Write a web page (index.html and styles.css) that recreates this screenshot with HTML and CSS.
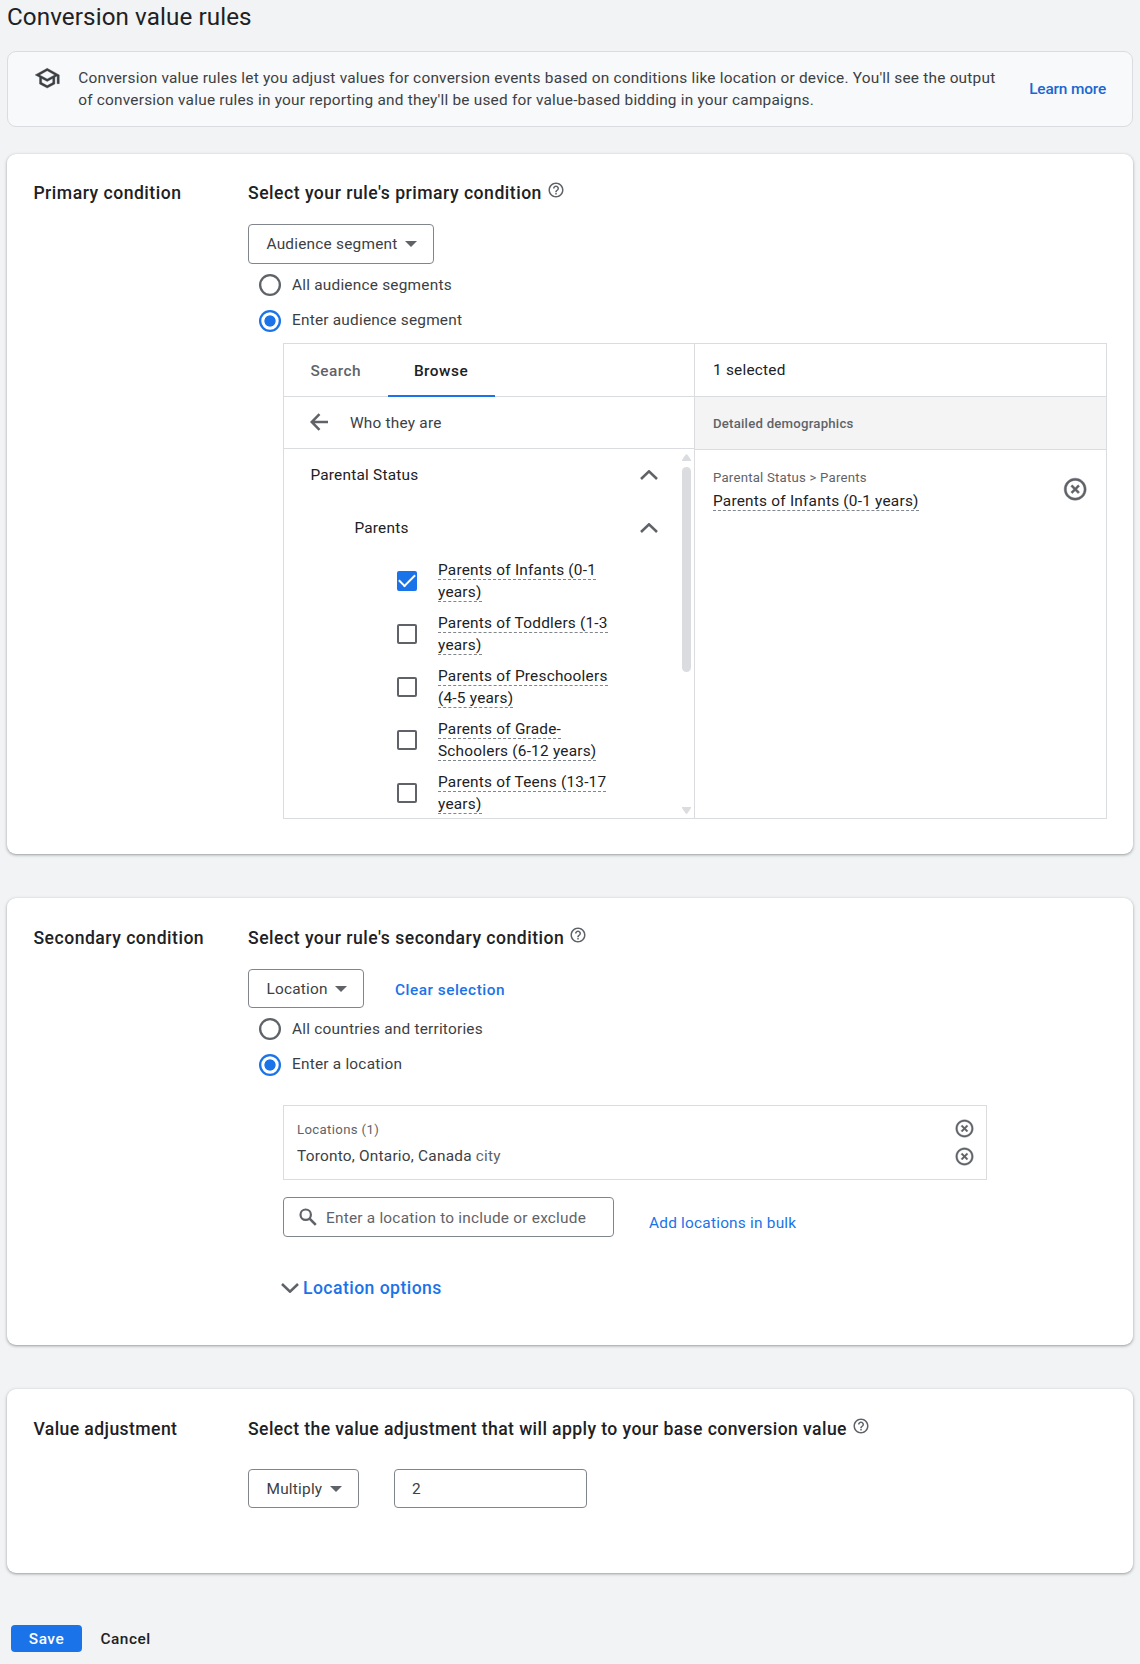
FILE: index.html
```html
<!DOCTYPE html>
<html lang="en">
<head>
  <meta charset="UTF-8" />
  <meta name="viewport" content="width=device-width, initial-scale=1" />
  <title>Conversion value rules</title>
  <link rel="stylesheet" href="styles.css">
</head>
<body>
  <svg class="sprite" width="0" height="0">
    <symbol id="help" viewBox="0 0 24 24"><path d="M11 18h2v-2h-2v2zm1-16C6.480 2 2 6.480 2 12s4.480 10 10 10 10-4.480 10-10S17.520 2 12 2zm0 18c-4.410 0-8-3.590-8-8s3.590-8 8-8 8 3.590 8 8-3.590 8-8 8zm0-14c-2.210 0-4 1.790-4 4h2c0-1.100.9-2 2-2s2 .9 2 2c0 2-3 1.750-3 5h2c0-2.250 3-2.500 3-5 0-2.210-1.790-4-4-4z"/></symbol>
    <symbol id="remove" viewBox="0 0 24 24"><path d="M14.590 8L12 10.590 9.410 8 8 9.410 10.590 12 8 14.590 9.410 16 12 13.410 14.590 16 16 14.590 13.410 12 16 9.410 14.590 8zM12 2C6.470 2 2 6.470 2 12s4.470 10 10 10 10-4.470 10-10S17.530 2 12 2zm0 18c-4.410 0-8-3.590-8-8s3.590-8 8-8 8 3.590 8 8-3.590 8-8 8z" stroke="currentColor" stroke-width="0.400"/></symbol>
    <symbol id="chevron-up" viewBox="0 0 18 10"><path d="M1 9l8-7.600L17 9" fill="none" stroke="currentColor" stroke-width="2.600"/></symbol>
    <symbol id="chevron-down" viewBox="0 0 18 10"><path d="M1 1l8 7.600L17 1" fill="none" stroke="currentColor" stroke-width="2.600"/></symbol>
  </svg>

  <h1>Conversion value rules</h1>

  <div class="banner">
    <svg class="school" viewBox="0 0 24 24"><path d="M12 3L1 9l4 2.180v6L12 21l7-3.820v-6l2-1.090V17h2V9L12 3zm6.820 6L12 12.720 5.180 9 12 5.280 18.820 9zM17 15.990l-5 2.730-5-2.730v-3.720L12 15l5-2.730v3.720z" stroke="currentColor" stroke-width="0.300"/></svg>
    <p>Conversion value rules let you adjust values for conversion events based on conditions like location or device. You'll see the output<br>of conversion value rules in your reporting and they'll be used for value-based bidding in your campaigns.</p>
    <a class="learn-more" href="#">Learn more</a>
  </div>

  <section class="card primary">
    <h2>Primary condition</h2>
    <div class="content">
      <h3>Select your rule's primary condition<svg class="help"><use href="#help"/></svg></h3>
      <button class="select w-audience">Audience segment<i class="caret"></i></button>
      <div class="radios">
        <label><input type="radio" name="audience">All audience segments</label>
        <label><input type="radio" name="audience" checked>Enter audience segment</label>
      </div>
      <div class="picker">
        <div class="browse">
          <div class="tabs">
            <span class="tab">Search</span>
            <span class="tab active">Browse</span>
          </div>
          <div class="back">
            <svg viewBox="0 0 18 18"><path d="M18 9H2M9.500 1.200L1.700 9l7.800 7.800" fill="none" stroke="currentColor" stroke-width="2.500"/></svg>
            Who they are
          </div>
          <div class="list">
            <div class="tree">
              <div class="group">Parental Status<svg class="chevron"><use href="#chevron-up"/></svg></div>
              <div class="group nested">Parents<svg class="chevron"><use href="#chevron-up"/></svg></div>
              <label class="item"><input type="checkbox" checked><span><u>Parents of Infants (0-1<br>years)</u></span></label>
              <label class="item"><input type="checkbox"><span><u>Parents of Toddlers (1-3<br>years)</u></span></label>
              <label class="item"><input type="checkbox"><span><u>Parents of Preschoolers<br>(4-5 years)</u></span></label>
              <label class="item"><input type="checkbox"><span><u>Parents of Grade-<br>Schoolers (6-12 years)</u></span></label>
              <label class="item"><input type="checkbox"><span><u>Parents of Teens (13-17<br>years)</u></span></label>
            </div>
            <div class="scrollbar">
              <svg viewBox="0 0 9 7"><path d="M4.500 0Q5.200 0 9 6v1H0V6Q3.800 0 4.500 0z"/></svg>
              <div class="thumb"></div>
              <svg viewBox="0 0 9 7"><path d="M4.500 7Q5.200 7 9 1V0H0v1Q3.800 7 4.500 7z"/></svg>
            </div>
          </div>
        </div>
        <div class="selected">
          <div class="count">1 selected</div>
          <div class="category">Detailed demographics</div>
          <div class="choice">
            <div>
              <div class="path">Parental Status &gt; Parents</div>
              <div class="name"><u>Parents of Infants (0-1 years)</u></div>
            </div>
            <svg class="remove large"><use href="#remove"/></svg>
          </div>
        </div>
      </div>
    </div>
  </section>

  <section class="card secondary">
    <h2>Secondary condition</h2>
    <div class="content">
      <h3>Select your rule's secondary condition<svg class="help"><use href="#help"/></svg></h3>
      <div class="row">
        <button class="select w-location">Location<i class="caret"></i></button>
        <a class="clear" href="#">Clear selection</a>
      </div>
      <div class="radios">
        <label><input type="radio" name="location">All countries and territories</label>
        <label><input type="radio" name="location" checked>Enter a location</label>
      </div>
      <div class="locations">
        <div class="loc-row"><span class="loc-title">Locations (1)</span><svg class="remove"><use href="#remove"/></svg></div>
        <div class="loc-row"><span class="loc-name">Toronto, Ontario, Canada <span class="muted">city</span></span><svg class="remove"><use href="#remove"/></svg></div>
      </div>
      <div class="search-row">
        <div class="search">
          <svg viewBox="0 0 18 18"><circle cx="6.700" cy="6.700" r="5.200" fill="none" stroke="currentColor" stroke-width="2.200"/><path d="M10.600 10.600l6.200 6.200" stroke="currentColor" stroke-width="2.600"/></svg>
          <span>Enter a location to include or exclude</span>
        </div>
        <a class="bulk" href="#">Add locations in bulk</a>
      </div>
      <a class="options" href="#"><svg class="chevron"><use href="#chevron-down"/></svg><span>Location options</span></a>
    </div>
  </section>

  <section class="card value">
    <h2>Value adjustment</h2>
    <div class="content">
      <h3>Select the value adjustment that will apply to your base conversion value<svg class="help"><use href="#help"/></svg></h3>
      <div class="row">
        <button class="select w-multiply">Multiply<i class="caret"></i></button>
        <input class="amount" type="text" value="2">
      </div>
    </div>
  </section>

  <div class="actions">
    <button class="save">Save</button>
    <button class="cancel">Cancel</button>
  </div>
</body>
</html>
```
FILE: styles.css
```css
* {
  box-sizing: border-box;
}
body {
  margin: 0;
  padding: 0 7px;
  height: 1664px;
  overflow: hidden;
  background: #f1f3f4;
  color: #3c4043;
  font-family: Roboto, "Liberation Sans", sans-serif;
  font-size: 15.4px;
  line-height: 22px;
  letter-spacing: 0.22px;
}
h1, h2, h3, p {
  margin: 0;
}
svg {
  fill: currentColor;
  flex: none;
}
.sprite {
  position: absolute;
}
a {
  color: #1a73e8;
  text-decoration: none;
}
button, input {
  font: inherit;
  letter-spacing: inherit;
  color: inherit;
}
h1 {
  height: 51px;
  font-size: 24.2px;
  font-weight: 400;
  line-height: 34px;
  letter-spacing: 0.1px;
  color: #202124;
}
.banner {
  display: flex;
  height: 76px;
  margin-bottom: 27px;
  padding: 15px 26px 0 27px;
  background: #f8f9fa;
  border: 1px solid #dadce0;
  border-radius: 9px;
}
.school {
  width: 26.4px;
  height: 26.4px;
  margin: -2px 17.4px 0 -0.6px;
}
.banner p {
  flex: 1;
  white-space: nowrap;
}
.learn-more {
  margin-top: 11px;
  font-weight: 500;
  letter-spacing: -0.15px;
  color: #1967d2;
}

/* cards */
.card {
  display: flex;
  margin-bottom: 44px;
  padding: 27px 26px 0 26.4px;
  background: #fff;
  border-radius: 9px;
  box-shadow: 0 1px 2px rgba(60,64,67,0.3), 0 1px 3px 1px rgba(60,64,67,0.15);
}
.primary { height: 700px; }
.secondary { height: 447px; }
.value { height: 184px; }
.secondary, .value {
  padding-top: 28px;
}
h2, h3 {
  font-size: 17.6px;
  font-weight: 500;
  line-height: 24px;
  letter-spacing: 0.5px;
  color: #202124;
}
h2 {
  width: 214.6px;
}
.value h2, .value h3 {
  letter-spacing: 0.41px;
}
.content {
  flex: 1;
}
h3 {
  display: flex;
  white-space: nowrap;
}
.help {
  width: 18px;
  height: 18px;
  margin: 0 0 0 5px;
  color: #5f6368;
}
.select {
  display: flex;
  align-items: center;
  justify-content: space-between;
  height: 40px;
  margin-top: 19px;
  padding: 0 16px 0 17.5px;
  background: #fff;
  border: 1px solid #80868b;
  border-radius: 4px;
}
.row .select {
  height: 39px;
}
.w-audience { width: 186px; }
.w-location { width: 116px; }
.w-multiply { width: 111px; }
.caret {
  border: 6px solid transparent;
  border-top-color: #5f6368;
  border-bottom: 0;
}
.row {
  display: flex;
}
.radios {
  margin: 3px 0 0 11px;
}
.radios label {
  display: flex;
  align-items: center;
  height: 35.5px;
}
input[type="radio"] {
  appearance: none;
  width: 22px;
  height: 22px;
  margin: 1px 11px 0 0;
  border-radius: 50%;
  box-shadow: inset 0 0 0 2.3px #5f6368;
}
input[type="radio"]:checked {
  background: radial-gradient(circle, #1a73e8 5.2px, #fff 6px);
  box-shadow: inset 0 0 0 2.3px #1a73e8;
}

/* audience picker */
.picker {
  display: flex;
  width: 824px;
  height: 476px;
  margin: 5px 0 0 35px;
  border: 1px solid #dadce0;
}
.browse {
  display: flex;
  flex-direction: column;
  width: 411px;
  border-right: 1px solid #dadce0;
}
.tabs {
  display: flex;
  height: 53px;
  border-bottom: 1px solid #dadce0;
  font-weight: 500;
  letter-spacing: 0.5px;
  line-height: 54px;
  color: #5f6368;
}
.tab {
  height: 53px;
  padding: 0 26.4px;
}
.active {
  color: #202124;
  border-bottom: 2px solid #1a73e8;
}
.back {
  display: flex;
  align-items: center;
  height: 52px;
  padding-left: 26px;
  border-bottom: 1px solid #dadce0;
}
.back svg {
  width: 18px;
  height: 18px;
  margin: -2px 22px 0 0;
  color: #5f6368;
}
.list {
  display: flex;
  height: 369px;
  overflow: hidden;
  color: #202124;
}
.tree {
  flex: 1;
  margin-top: -1px;
}
.group {
  display: flex;
  align-items: center;
  justify-content: space-between;
  height: 53px;
  padding: 0 24px 0 26.4px;
}
.nested {
  padding-left: 70.4px;
}
.chevron {
  width: 18px;
  height: 10px;
  color: #5f6368;
}
.item {
  display: flex;
  align-items: center;
  height: 53px;
  padding-left: 113px;
}
input[type="checkbox"] {
  appearance: none;
  width: 20px;
  height: 20px;
  margin: 0 21px 0 0;
  border: 2px solid #5f6368;
  border-radius: 2px;
}
input[type="checkbox"]:checked {
  display: grid;
  place-items: center;
  background: #1a73e8;
  border-color: #1a73e8;
}
input[type="checkbox"]:checked::before {
  content: "";
  width: 14px;
  height: 7px;
  border: solid #fff;
  border-width: 0 0 2px 2px;
  transform: translateY(-2px) rotate(-45deg);
}
u {
  text-decoration: none;
  border-bottom: 1px dashed #80868b;
}
.scrollbar {
  width: 12px;
  padding-top: 5px;
}
.scrollbar svg {
  display: block;
  width: 9px;
  height: 7px;
  color: #dadce0;
}
.thumb {
  width: 9px;
  height: 205px;
  margin: 6px 0 135px;
  background: #dadce0;
  border-radius: 5px;
}
.selected {
  flex: 1;
  color: #202124;
}
.count, .category {
  height: 53px;
  padding-left: 18px;
  border-bottom: 1px solid #dadce0;
  line-height: 52px;
}
.category {
  background: #f4f4f4;
  font-size: 13.2px;
  font-weight: 500;
  line-height: 54px;
  color: #5f6368;
}
.choice {
  display: flex;
  justify-content: space-between;
  padding: 17px 18px 0 18px;
}
.path {
  font-size: 13.2px;
  color: #5f6368;
}
.name {
  margin-top: 1px;
}
.remove {
  width: 21px;
  height: 21px;
  color: #5f6368;
}
.large {
  width: 26.4px;
  height: 26.4px;
  margin-top: 9px;
}

/* location */
.clear {
  margin: 29px 0 0 31px;
  font-weight: 500;
  letter-spacing: 0.5px;
}
.locations {
  width: 704px;
  height: 75px;
  margin: 23px 0 0 35px;
  padding: 8px 11px 0 13px;
  border: 1px solid #dadce0;
}
.loc-row {
  display: flex;
  align-items: center;
  justify-content: space-between;
  height: 28.5px;
}
.loc-title {
  padding-top: 3px;
  font-size: 13.2px;
  letter-spacing: 0.35px;
}
.loc-name {
  padding-bottom: 2px;
}
.loc-title, .muted {
  color: #5f6368;
}
.search-row {
  display: flex;
  margin: 17px 0 0 35px;
}
.search {
  display: flex;
  align-items: center;
  width: 331px;
  height: 40px;
  padding: 1px 0 0 15px;
  border: 1px solid #80868b;
  border-radius: 4px;
  color: #5f6368;
}
.search svg {
  width: 18px;
  height: 18px;
  margin: -2px 9px 0 0;
}
.bulk {
  margin: 15px 0 0 35px;
}
.options {
  display: flex;
  align-items: center;
  margin: 40px 0 0 33px;
  font-size: 17.6px;
  font-weight: 500;
  letter-spacing: 0.45px;
}
.options .chevron {
  margin-right: 4px;
}

/* value adjustment */
.value .select, .amount {
  margin-top: 28px;
}
.amount {
  width: 193px;
  height: 39px;
  margin-left: 35px;
  padding: 0 17px;
  background: #fff;
  border: 1px solid #80868b;
  border-radius: 4px;
}

.actions {
  display: flex;
  gap: 18.5px;
  margin: 52px 0 0 4px;
  font-weight: 500;
  letter-spacing: 0.5px;
}
.save, .cancel {
  height: 27px;
  padding: 0;
  border: 0;
  background: none;
  color: #202124;
}
.save {
  width: 71px;
  background: #1a73e8;
  border-radius: 4px;
  color: #fff;
}
```
